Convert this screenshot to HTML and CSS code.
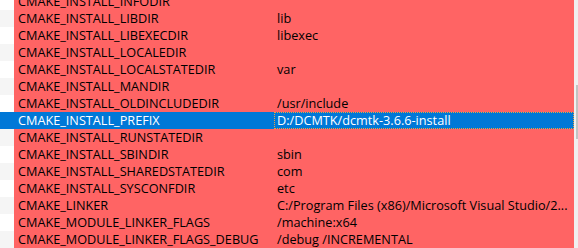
FILE: index.html
```html
<!DOCTYPE html>
<html lang="en">
<head>
  <meta charset="UTF-8" />
  <title>CMake cache</title>
  <link rel="stylesheet" href="styles.css">
</head>
<body>
  <div class="view">
    <div class="tree">
      <div class="row"><span class="gutter"></span><span class="name">CMAKE_INSTALL_INFODIR</span><span class="value"></span></div>
      <div class="row alt"><span class="gutter"></span><span class="name">CMAKE_INSTALL_LIBDIR</span><span class="value">lib</span></div>
      <div class="row"><span class="gutter"></span><span class="name">CMAKE_INSTALL_LIBEXECDIR</span><span class="value">libexec</span></div>
      <div class="row alt"><span class="gutter"></span><span class="name">CMAKE_INSTALL_LOCALEDIR</span><span class="value"></span></div>
      <div class="row"><span class="gutter"></span><span class="name">CMAKE_INSTALL_LOCALSTATEDIR</span><span class="value">var</span></div>
      <div class="row alt"><span class="gutter"></span><span class="name">CMAKE_INSTALL_MANDIR</span><span class="value"></span></div>
      <div class="row"><span class="gutter"></span><span class="name">CMAKE_INSTALL_OLDINCLUDEDIR</span><span class="value">/usr/include</span></div>
      <div class="row selected"><span class="gutter"></span><span class="name">CMAKE_INSTALL_PREFIX</span><span class="value">D:/DCMTK/dcmtk-3.6.6-install</span></div>
      <div class="row alt"><span class="gutter"></span><span class="name">CMAKE_INSTALL_RUNSTATEDIR</span><span class="value"></span></div>
      <div class="row"><span class="gutter"></span><span class="name">CMAKE_INSTALL_SBINDIR</span><span class="value">sbin</span></div>
      <div class="row alt"><span class="gutter"></span><span class="name">CMAKE_INSTALL_SHAREDSTATEDIR</span><span class="value">com</span></div>
      <div class="row"><span class="gutter"></span><span class="name">CMAKE_INSTALL_SYSCONFDIR</span><span class="value">etc</span></div>
      <div class="row alt"><span class="gutter"></span><span class="name">CMAKE_LINKER</span><span class="value">C:/Program Files (x86)/Microsoft Visual Studio/2...</span></div>
      <div class="row"><span class="gutter"></span><span class="name">CMAKE_MODULE_LINKER_FLAGS</span><span class="value">/machine:x64</span></div>
      <div class="row alt"><span class="gutter"></span><span class="name">CMAKE_MODULE_LINKER_FLAGS_DEBUG</span><span class="value">/debug /INCREMENTAL</span></div>
    </div>
    <div class="scrollbar"><div class="thumb"></div></div>
  </div>
</body>
</html>
```

FILE: styles.css
```css
body {
  margin: 0;
  font-family: 'Open Sans', 'Noto Sans', sans-serif;
  font-size: 12.7px;
  color: #000;
  background: #fff;
  overflow: hidden;
}

.view {
  display: flex;
  width: 578px;
  height: 248px;
  overflow: hidden;
}

.tree {
  flex: 1;
  min-width: 0;
  margin-top: -7px;
}

.row {
  display: flex;
  height: 17px;
  line-height: 17px;
  white-space: nowrap;
}

.gutter {
  width: 14px;
  flex: none;
  background: #fff;
}

.row.alt .gutter {
  background: #f5f5f5;
}

.name {
  width: 260px;
  flex: none;
  padding-left: 4px;
  box-sizing: border-box;
  background: #ff6464;
}

.value {
  flex: 1;
  min-width: 0;
  padding-left: 3px;
  overflow: hidden;
  background: #ff6464;
}

.row.selected .gutter,
.row.selected .name,
.row.selected .value {
  background: #0078d7;
  color: #fff;
}

.row.selected .value {
  border: 1px dotted #f0a040;
  padding-left: 2px;
  line-height: 15px;
}

.scrollbar {
  width: 4px;
  flex: none;
  background: #f0f0f0;
  display: flex;
  justify-content: flex-end;
}

.thumb {
  width: 2px;
  height: 54px;
  margin-top: 85px;
  background: #c2c2c2;
}
```
